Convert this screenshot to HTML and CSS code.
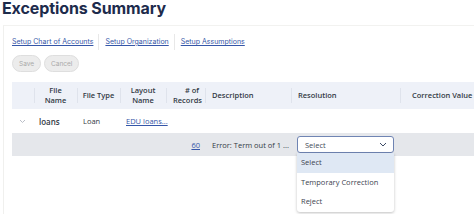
FILE: index.html
```html
<!DOCTYPE html>
<html lang="en">
<head>
    <meta charset="UTF-8">
    <title>Exceptions Summary</title>
    <link rel="stylesheet" href="styles.css">
</head>
<body>
    <h1 class="page-title">Exceptions Summary</h1>
    <div class="card">
        <div class="setup-links">
            <a href="#">Setup Chart of Accounts</a>
            <a href="#">Setup Organization</a>
            <a href="#">Setup Assumptions</a>
        </div>
        <div class="actions">
            <button class="pill-btn" disabled>Save</button>
            <button class="pill-btn" disabled>Cancel</button>
        </div>
        <table class="summary">
            <colgroup>
                <col style="width:22px">
                <col style="width:43px">
                <col style="width:43px">
                <col style="width:46px">
                <col style="width:39px">
                <col style="width:86px">
                <col style="width:109px">
                <col>
            </colgroup>
            <thead>
                <tr>
                    <th></th>
                    <th class="center">File<br>Name</th>
                    <th class="center">File Type</th>
                    <th class="center">Layout<br>Name</th>
                    <th class="right">#&nbsp;of<br>Records</th>
                    <th>Description</th>
                    <th>Resolution</th>
                    <th class="last">Correction Value</th>
                </tr>
            </thead>
            <tbody>
                <tr class="file-row">
                    <td class="chev">
                        <svg width="7" height="5" viewBox="0 0 7 5"><path d="M1 1l2.5 2.5L6 1" fill="none" stroke="#b3b8c2" stroke-width="0.9"/></svg>
                    </td>
                    <td class="file-name">loans</td>
                    <td>Loan</td>
                    <td><a href="#">EDU loans...</a></td>
                    <td></td>
                    <td></td>
                    <td></td>
                    <td></td>
                </tr>
                <tr class="error-row">
                    <td></td>
                    <td></td>
                    <td></td>
                    <td></td>
                    <td class="right"><a href="#">60</a></td>
                    <td>Error: Term out of 1 ...</td>
                    <td class="res-cell">
                        <div class="select-wrap">
                            <div class="select-box">
                                <span>Select</span>
                                <svg width="8" height="5" viewBox="0 0 8 5"><path d="M1 1l3 3 3-3" fill="none" stroke="#3c4a66" stroke-width="1"/></svg>
                            </div>
                            <ul class="options">
                                <li class="active">Select</li>
                                <li>Temporary Correction</li>
                                <li>Reject</li>
                            </ul>
                        </div>
                    </td>
                    <td></td>
                </tr>
            </tbody>
        </table>
    </div>
</body>
</html>
```

FILE: styles.css
```css
html, body {
    margin: 0;
    padding: 0;
    background: #fff;
    overflow: hidden;
}
body {
    width: 474px;
    height: 214px;
    font-family: "Open Sans", Arial, sans-serif;
    color: #333a45;
}
.page-title {
    margin: 0 0 0 2px;
    font-family: Inter, "Noto Sans", sans-serif;
    font-weight: 700;
    font-size: 16px;
    line-height: 16px;
    color: #1d2b4c;
    letter-spacing: -0.1px;
}
.card {
    margin: 9px 0 0 3px;
    border-top: 1px solid #f2f2f0;
    border-left: 1px solid #f0f0ee;
    padding: 8px 0 0 8px;
    height: 188px;
}
.setup-links {
    display: flex;
    align-items: center;
    height: 16px;
}
.setup-links a {
    font-family: Inter, sans-serif;
    font-size: 7px;
    color: #3556a8;
    text-decoration: underline;
    padding: 0 5px 0 6px;
    border-left: 1px solid #e8e8e8;
    line-height: 16px;
}
.setup-links a:first-child {
    padding-left: 0;
    border-left: none;
}
.actions {
    display: flex;
    gap: 3px;
    margin-top: 5px;
}
.pill-btn {
    font-family: Inter, sans-serif;
    font-size: 6.5px;
    color: #a9a9a9;
    background: #ececec;
    border: 1px solid #dedede;
    border-radius: 9px;
    height: 17px;
    padding: 0 6px;
}
.summary {
    margin-top: 10px;
    width: 463px;
    border-collapse: collapse;
    table-layout: fixed;
    font-size: 7.5px;
}
.summary th {
    background: #eef1f8;
    height: 27px;
    font-weight: 600;
    color: #333a45;
    text-align: left;
    padding: 0 7px;
    line-height: 9.5px;
    position: relative;
    vertical-align: middle;
    white-space: nowrap;
}
.summary th + th::before {
    content: '';
    position: absolute;
    left: 0;
    top: 6px;
    bottom: 6px;
    border-left: 1px solid #dfe3ec;
}
.summary th.center {
    text-align: center;
    padding: 0 3px;
}
.summary th.right {
    text-align: right;
    padding-right: 6px;
}
.summary th.last {
    padding-left: 12px;
    padding-right: 0;
}
.summary td {
    padding: 0 6px;
    white-space: nowrap;
    overflow: visible;
}
.summary td.right {
    text-align: right;
    padding-right: 5px;
}
.summary a {
    color: #3556a8;
    text-decoration: underline;
}
.file-row td {
    height: 24px;
}
.file-row td.chev {
    padding-left: 7px;
}
.file-row td.file-name {
    font-weight: 600;
    font-size: 8px;
    padding-left: 5px;
}
.error-row td {
    background: #e5e7eb;
    height: 23px;
}
.error-row td:nth-child(6) {
    padding-left: 7px;
}
.res-cell {
    position: relative;
}
.summary td.res-cell {
    padding-left: 6px;
}
.select-wrap {
    position: relative;
    width: 97px;
}
.select-box {
    display: flex;
    justify-content: space-between;
    align-items: center;
    box-sizing: border-box;
    height: 17px;
    background: #fff;
    border: 1px solid #6f84b3;
    border-radius: 3px;
    padding: 0 6px 0 7px;
    color: #444c58;
}
.options {
    position: absolute;
    left: 0;
    top: 17px;
    width: 97px;
    margin: 0;
    padding: 0;
    list-style: none;
    background: #fff;
    border-radius: 0 0 3px 3px;
    box-shadow: 0 1px 3px rgba(0, 0, 0, 0.25);
    z-index: 2;
}
.options li {
    height: 19.5px;
    line-height: 19.5px;
    padding-left: 4px;
    color: #3c4350;
}
.options li.active {
    background: #dfe8f4;
}
```
